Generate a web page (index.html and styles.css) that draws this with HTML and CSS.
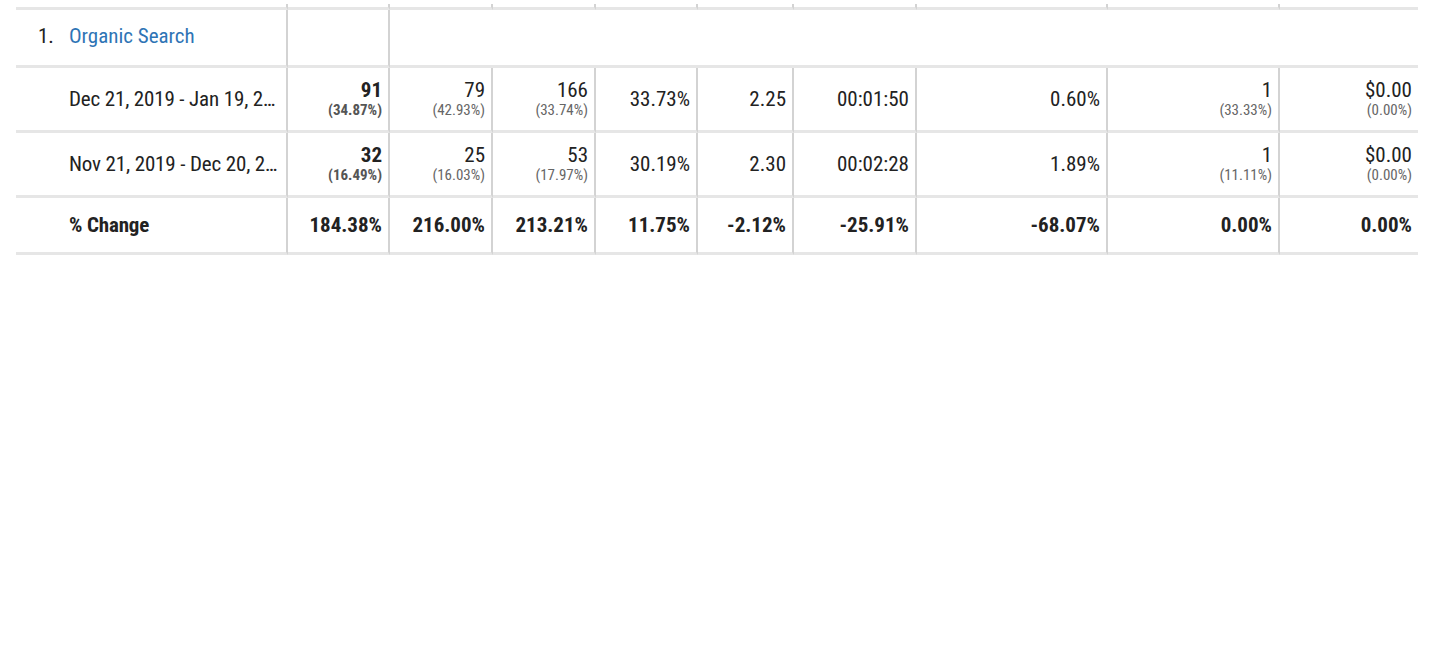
FILE: index.html
```html
<!DOCTYPE html>
<html lang="en">
<head>
<meta charset="utf-8">
<title>Channel comparison</title>
<link rel="stylesheet" href="styles.css">
</head>
<body>
<div class="report">
  <div class="tick"></div><div class="tick"></div><div class="tick"></div><div class="tick"></div><div class="tick"></div>
  <div class="tick"></div><div class="tick"></div><div class="tick"></div><div class="tick"></div><div class="tick last"></div>

  <div class="cell dim group"><span class="idx">1.</span><a class="link">Organic Search</a></div>
  <div class="cell"></div>
  <div class="cell span8 last"></div>

  <div class="cell dim">Dec 21, 2019 - Jan 19, 2…</div>
  <div class="cell num key"><span class="v">91</span><span class="p">(34.87%)</span></div>
  <div class="cell num"><span class="v">79</span><span class="p">(42.93%)</span></div>
  <div class="cell num"><span class="v">166</span><span class="p">(33.74%)</span></div>
  <div class="cell num"><span class="v">33.73%</span></div>
  <div class="cell num"><span class="v">2.25</span></div>
  <div class="cell num"><span class="v">00:01:50</span></div>
  <div class="cell num"><span class="v">0.60%</span></div>
  <div class="cell num"><span class="v">1</span><span class="p">(33.33%)</span></div>
  <div class="cell num last"><span class="v">$0.00</span><span class="p">(0.00%)</span></div>

  <div class="cell dim">Nov 21, 2019 - Dec 20, 2…</div>
  <div class="cell num key"><span class="v">32</span><span class="p">(16.49%)</span></div>
  <div class="cell num"><span class="v">25</span><span class="p">(16.03%)</span></div>
  <div class="cell num"><span class="v">53</span><span class="p">(17.97%)</span></div>
  <div class="cell num"><span class="v">30.19%</span></div>
  <div class="cell num"><span class="v">2.30</span></div>
  <div class="cell num"><span class="v">00:02:28</span></div>
  <div class="cell num"><span class="v">1.89%</span></div>
  <div class="cell num"><span class="v">1</span><span class="p">(11.11%)</span></div>
  <div class="cell num last"><span class="v">$0.00</span><span class="p">(0.00%)</span></div>

  <div class="cell dim total">% Change</div>
  <div class="cell num total"><span class="v">184.38%</span></div>
  <div class="cell num total"><span class="v">216.00%</span></div>
  <div class="cell num total"><span class="v">213.21%</span></div>
  <div class="cell num total"><span class="v">11.75%</span></div>
  <div class="cell num total"><span class="v">-2.12%</span></div>
  <div class="cell num total"><span class="v">-25.91%</span></div>
  <div class="cell num total"><span class="v">-68.07%</span></div>
  <div class="cell num total"><span class="v">0.00%</span></div>
  <div class="cell num total last"><span class="v">0.00%</span></div>
</div>
</body>
</html>
```
FILE: styles.css
```css
html, body {
  margin: 0;
  padding: 0;
  background: #ffffff;
}

body {
  font-family: "Roboto Condensed", Roboto, "Liberation Sans", sans-serif;
  font-stretch: 87%;
  color: #222222;
}

.report {
  margin: 4px 0 0 16px;
  width: 1402px;
  display: grid;
  grid-template-columns: 272px 102px 103px 103px 102px 96px 123px 191px 172px 138px;
  grid-template-rows: 6px 58px 65px 65px 57px;
}

.tick {
  border-right: 2px solid #d3d3d3;
  border-bottom: 3px solid #e6e6e6;
}

.cell {
  border-right: 2px solid #d3d3d3;
  border-bottom: 3px solid #e6e6e6;
  display: flex;
  flex-direction: column;
  justify-content: center;
  min-width: 0;
}

.last {
  border-right: none;
}

.span8 {
  grid-column: span 8;
}

.dim {
  padding-left: 53px;
  font-size: 21px;
  letter-spacing: -0.15px;
  white-space: nowrap;
  overflow: hidden;
}

.group {
  flex-direction: row;
  align-items: center;
  justify-content: flex-start;
  padding-left: 22px;
  padding-bottom: 3px;
  letter-spacing: 0;
}

.idx {
  width: 31px;
}

.link {
  color: #2e74b5;
  text-decoration: none;
}

.num {
  align-items: flex-end;
  padding-right: 6px;
}

.v {
  font-size: 21px;
  line-height: 22px;
}

.p {
  font-size: 15px;
  font-stretch: 100%;
  line-height: 18px;
  color: #666666;
}

.key .v,
.key .p {
  font-weight: 700;
}

.key .p {
  color: #555555;
}

.total {
  font-weight: 700;
}
```
